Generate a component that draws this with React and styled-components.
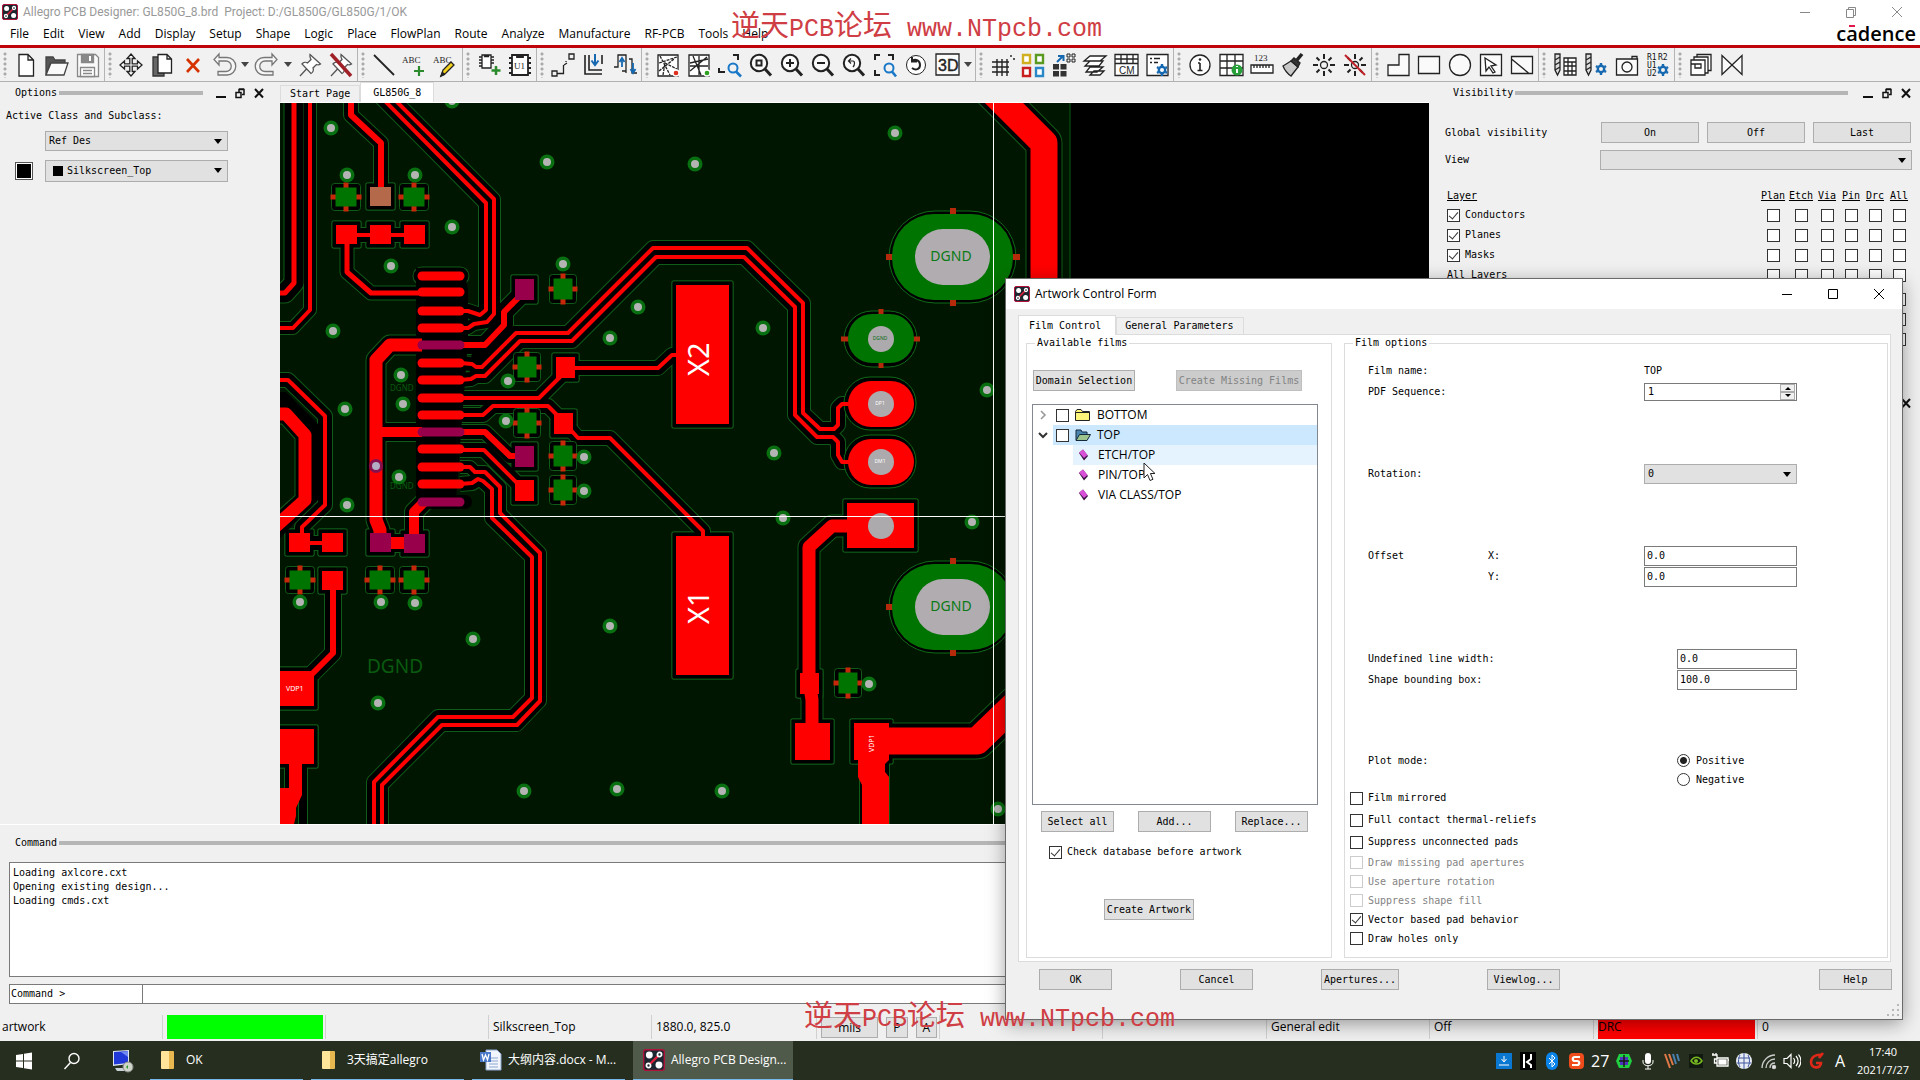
import React from 'react';
import styled, { createGlobalStyle, css } from 'styled-components';

const mono = '"DejaVu Sans Mono", "Noto Sans CJK SC", monospace';
const ui = '"Open Sans", "Noto Sans CJK SC", sans-serif';

/* ---------- data ---------- */

const menuItems = [
  'File', 'Edit', 'View', 'Add', 'Display', 'Setup', 'Shape', 'Logic', 'Place',
  'FlowPlan', 'Route', 'Analyze', 'Manufacture', 'RF-PCB', 'Tools', 'Help',
];

const toolGroups = [
  ['new', 'open', 'save'],
  ['move', 'copy', 'delete', 'undo', 'arrow', 'redo', 'arrow', 'pin', 'unpin'],
  ['line', 'textAdd', 'textEdit'],
  ['chipAdd', 'chip'],
  ['route', 'slide', 'delay'],
  ['ratsOff', 'ratsOn', 'zoomPoints', 'zoomFit', 'zoomIn', 'zoomOut', 'zoomPrev', 'zoomSel', 'redraw', 'view3d', 'arrow'],
  ['grid', 'colors', 'shadow', 'layers', 'cm', 'params'],
  ['info', 'gridInfo', 'measure', 'brush', 'sun', 'sunOff'],
  ['shapeL', 'rect', 'circle', 'select', 'voidRect'],
  ['drillTable', 'drillGear', 'camera', 'rename'],
  ['artwork', 'bowtie'],
];

const layerCols = ['Plan', 'Etch', 'Via', 'Pin', 'Drc', 'All'];
const layerRows = ['Conductors', 'Planes', 'Masks'];

const filmChecks = [
  { label: 'Film mirrored', tall: true },
  { label: 'Full contact thermal-reliefs', tall: true },
  { label: 'Suppress unconnected pads', tall: true },
  { label: 'Draw missing pad apertures', disabled: true },
  { label: 'Use aperture rotation', disabled: true },
  { label: 'Suppress shape fill', disabled: true },
  { label: 'Vector based pad behavior', checked: true },
  { label: 'Draw holes only' },
];

/* board geometry, in canvas units: [points, width, clearance] */
const traces = [
  ['294,95 294,283 285,293 275,293', 5, 7],
  ['310,95 310,310 293,328 275,328', 4, 4],
  ['351,95 351,115 381,143 381,190', 6, 4],
  ['379,95 486,203 486,310 480,315 468,311 455,311', 4, 5],
  ['390,95 494,199 494,314 487,322 474,324 468,328 455,328', 4, 4],
  ['347,235 414,235', 4, 5],
  ['347,240 347,272 371,293 420,293', 5, 4],
  ['422,345 390,345 376,360 376,520 380,530 380,542', 13, 3],
  ['376,432 422,432', 10, 4],
  ['460,345 485,345 504,325 504,312 520,296', 6, 6],
  ['460,363 472,364 476,367 482,367 516,333 568,333 653,248 747,248 803,303 803,413 820,429 834,429 838,425 838,408 842,404 850,404', 4, 5],
  ['460,380 471,379 476,376 485,376 520,341 572,341 656,257 744,257 795,307 795,415 817,437 833,437 838,442 838,455 842,462 850,462', 4, 5],
  ['460,398 539,398 562,375', 4, 5],
  ['570,368 658,368 672,355 680,355', 4, 5],
  ['460,415 483,415 493,406 548,406 560,418 578,438 610,438 703,531 703,538', 4, 5],
  ['460,432 485,432 510,456 520,456', 6, 4],
  ['460,450 484,450 520,486', 4, 5],
  ['460,467 470,467 475,472 485,472 500,487 500,513 540,553 540,701 517,725 442,725 382,785 382,830', 4, 4],
  ['460,484 472,483 478,479 483,481 492,489 492,518 532,557 532,698 513,717 438,717 374,782 374,830', 4, 5],
  ['424,502 414,512 414,540', 10, 4],
  ['380,543 414,543', 12, 3],
  ['275,414 286,414 305,435 305,500 275,527', 13, 3],
  ['275,380 288,380 325,416 325,505 302,527 302,540', 4, 5],
  ['299,543 333,543', 4, 5],
  ['333,585 333,653 312,674', 6, 5],
  ['850,526 832,526 809,547 809,680 812,700 812,725', 13, 4],
  ['889,741 977,741 1030,690', 27, 4],
  ['990,89 1044,143 1044,300', 27, 4],
];

const icPins = [276, 292, 311, 328, 345, 363, 380, 398, 415, 432, 449, 467, 484, 502];
const purplePins = [345, 432, 502];

// [x, y, width, height, colour]
const pads = [
  [370, 187, 21, 19, '#b4694b'],
  [336, 225, 21, 19], [370, 225, 21, 19], [404, 225, 21, 19],
  [515, 279, 19, 21, '#99004c'],
  [556, 357, 19, 21], [554, 413, 19, 21],
  [515, 446, 19, 21, '#99004c'], [515, 480, 19, 21],
  [370, 533, 21, 19, '#99004c'], [404, 534, 21, 19, '#99004c'],
  [289, 533, 21, 19], [322, 533, 21, 19], [322, 571, 21, 19],
  [275, 671, 39, 35], [275, 729, 39, 35],
  [676, 285, 53, 139], [676, 536, 53, 139],
  [847, 503, 67, 45], [800, 673, 19, 21], [795, 723, 35, 37], [854, 723, 35, 37],
];

// ground pads with thermal spokes: [centre x, centre y, width, height]
const groundPads = [
  [346, 197, 21, 19], [414, 197, 21, 19], [563, 289, 19, 21], [527, 367, 19, 21],
  [527, 423, 19, 21], [563, 456, 19, 21], [563, 490, 19, 21], [300, 580, 21, 19],
  [380, 580, 21, 19], [414, 580, 21, 19], [848, 683, 19, 21],
];

const vias = [
  [331, 128], [452, 101], [347, 175], [415, 175], [452, 227], [391, 266], [333, 331], [401, 375],
  [403, 404], [345, 409], [547, 162], [638, 307], [610, 338], [563, 264], [508, 381], [506, 421],
  [584, 457], [584, 491], [399, 477], [347, 505], [300, 602], [381, 602], [415, 603], [473, 639],
  [610, 626], [378, 703], [524, 791], [617, 789], [695, 164], [895, 133], [763, 328], [987, 390],
  [774, 453], [783, 518], [972, 522], [869, 684], [722, 791], [998, 809],
];

/* ---------- drawings ---------- */

const BrandIcon = ({ size = 16 }) => (
  <svg width={size} height={size} viewBox="0 0 16 16">
    <rect x="0.5" y="0.5" width="15" height="15" rx="1.5" fill="#1c2630" stroke="#b0123a" />
    <path d="M5 11 11 5" stroke="#e0203a" strokeWidth="1.6" />
    <circle cx="4.6" cy="4.4" r="2.5" fill="#fff" />
    <circle cx="11.6" cy="11.6" r="2.5" fill="#fff" />
    <circle cx="12" cy="4" r="1.5" fill="none" stroke="#fff" strokeWidth="1.3" />
    <circle cx="4" cy="12" r="1.5" fill="none" stroke="#fff" strokeWidth="1.3" />
  </svg>
);

const gear = (x, y) => (
  <g transform={`translate(${x} ${y})`} stroke="#1668b0" fill="none">
    <circle r="3.2" strokeWidth="2.4" />
    <path d="M0-6V-4M0 6V4M-5-3-3.500-2M5 3 3.500 2M-5 3-3.500 2M5-3 3.500-2" strokeWidth="2.4" />
  </g>
);

const lens = (inner) => (
  <>
    <circle cx="12" cy="12" r="8.2" strokeWidth="2" fill="#fafafa" />
    <path d="m18 18 6 6.5" strokeWidth="3" />
    {inner}
  </>
);

const rays = 'M14 3v5M14 20v5M3 14h5M20 14h5M6.500 6.500l3 3M18.500 18.500l3 3M6.500 21.500l3-3M18.500 9.500l3-3';

const pinPath = 'M14 3.500 24.500 13c-2 1.500-4 .5-4 .5L17 17c1 2 0 4.500-2 5.500L6 13c1.500-2 4-2 5.500-1L15 8.500s-1.500-3-1-5zM10.500 18 4 25';

const icons = {
  new: <path d="M7 3.500h9l5.500 5.500v16H7zM16 3.500V9h5.500" fill="#fff" />,
  open: (
    <>
      <path d="M3 24V6h7l2 3h10v4H7z" fill="#555" stroke="#444" />
      <path d="M3 24 8 12h17l-4 12z" fill="#fafafa" stroke="#444" />
    </>
  ),
  save: (
    <g stroke="#888">
      <path d="M3.500 3.500h18l3 3v19h-21z" fill="#fafafa" />
      <path d="M7.500 3.500h12v8h-12z" fill="#888" />
      <path d="M16 5v5" stroke="#fff" strokeWidth="2" />
      <path d="M6.500 16.500h14v9h-14zM9 19.500h9M9 22.500h9" fill="#fff" />
    </g>
  ),
  move: <path d="M14 3l4 4.500h-2.800v5.300h5.300V10L25 14l-4.500 4v-2.800h-5.300v5.300H18L14 25l-4-4.500h2.800v-5.300H7.500V18L3 14l4.500-4v2.800h5.300V7.500H10z" fill="#fff" />,
  copy: (
    <>
      <path d="M5 6h11v19H5z" fill="#666" stroke="#333" />
      <path d="M10 3.500h9l4.500 4.500v14H10zM19 3.500V8h4.500" fill="#fff" />
    </>
  ),
  delete: <path d="m8 8 12 13M20 8 8 21" stroke="#d63200" strokeWidth="2.600" />,
  undo: <path d="M9 3 4 8.500 9 14v-4h7a5 5 0 0 1 0 10.500H8V24h9a8.500 8.500 0 0 0 0-17.500H9z" stroke="#777" fill="#f6f6f6" />,
  redo: <path d="m19 3 5 5.500-5 5.500v-4h-7a5 5 0 0 0 0 10.500h8V24h-9a8.500 8.500 0 0 1 0-17.500h8z" stroke="#777" fill="#f6f6f6" />,
  pin: <path d={pinPath} stroke="#555" fill="#fff" />,
  unpin: (
    <>
      <path d={pinPath} stroke="#555" fill="#fff" />
      <path d="m4 3 20 22" stroke="#a02028" strokeWidth="3.500" />
    </>
  ),
  line: <path d="m4 4 20 20" strokeWidth="1.800" />,
  textAdd: (
    <>
      <text x="1" y="12" fontSize="9" fontFamily="Liberation Serif, serif" fill="#222" stroke="none">ABC</text>
      <path d="M18 15v10M13 20h10" stroke="#2b8a2b" strokeWidth="2.200" />
    </>
  ),
  textEdit: (
    <>
      <text x="1" y="12" fontSize="9" fontFamily="Liberation Serif, serif" fill="#222" stroke="none">ABC</text>
      <path d="m9 25 2-6 8-8 3 3-8 8z" fill="#f2d21e" />
      <path d="m9 25 1.500-3.500 2 2z" fill="#222" />
    </>
  ),
  chipAdd: (
    <>
      <path d="M7 4h9v13H7zM7 6H4M7 9H4M7 12H4M7 15H4M16 6h3M16 9h3M16 12h3M9.500 4v1.500h4V4" fill="#fff" />
      <path d="M21 15v9M16.500 19.500h9" stroke="#2b8a2b" strokeWidth="2.500" />
    </>
  ),
  chip: (
    <>
      <path d="M6 4h16v20H6zM6 7H3M6 12H3M6 17H3M6 22H3M22 7h3M22 12h3M22 17h3M22 22h3M11 4v2h6V4" fill="#fff" strokeWidth="1.800" />
      <text x="8" y="18" fontSize="9" fontFamily="Liberation Serif, serif" fill="#222" stroke="none">U1</text>
    </>
  ),
  route: <path d="M3 20h5v5H3zM20 3h5v5h-5zM8 22.500h6.500V14M17 10v1M18 12l-3 2" />,
  slide: (
    <>
      <path d="M5 4v19h17M9 4v15h13M22 4v9" strokeWidth="1.600" />
      <path d="M15 3v10M11.500 9.500 15 14l3.500-4.500" stroke="#1668b0" strokeWidth="2" />
    </>
  ),
  delay: (
    <>
      <path d="M3 16h4V4h8v18M11 20h4M18 8h3v14h5" />
      <path d="M11 16V9M8.500 11 11 7l2.500 4M22 12v9M19.500 18l2.500 4 2.500-4" stroke="#1668b0" strokeWidth="1.800" />
    </>
  ),
  ratsOff: (
    <>
      <path d="M4 4h20v21H4z" fill="#fff" />
      <path d="m5 12 18-6M6 5l10 19M5 20 20 8M9 24l2-12 12 6" strokeDasharray="3 1" />
      <circle cx="22" cy="22" r="3" fill="#e03020" stroke="#fff" />
    </>
  ),
  ratsOn: (
    <>
      <path d="M4 4h20v21H4z" fill="#fff" />
      <path d="M5 12 23 8M8 5l8 19M5 20 22 6M14 5v19M5 15h18" />
      <circle cx="22" cy="22" r="3" fill="#30a020" stroke="#fff" />
    </>
  ),
  zoomPoints: (
    <>
      <path d="M17 4h5v5M3 17v4h6" strokeWidth="2" />
      <circle cx="17" cy="17" r="4.500" stroke="#1a78c8" strokeWidth="2" fill="none" />
      <path d="m20 20.500 5 5" stroke="#1a78c8" strokeWidth="2.600" />
    </>
  ),
  zoomFit: lens(<path d="M9.500 9.500h5v5h-5z" strokeWidth="2" />),
  zoomIn: lens(<path d="M12 8v8M8 12h8" strokeWidth="2" />),
  zoomOut: lens(<path d="M8 12h8" strokeWidth="2" />),
  zoomPrev: lens(<path d="M11 7.500 8.500 10l2.500 2.500M9 10h4c2 0 2 4 0 6" strokeWidth="1.200" />),
  zoomSel: (
    <>
      <path d="M4 9V4h5M17 4h5v5M4 19v5h5" strokeWidth="2" />
      <circle cx="18" cy="17" r="4.500" stroke="#1a78c8" strokeWidth="2" fill="none" />
      <path d="m21 20.500 4 5" stroke="#1a78c8" strokeWidth="2.600" />
    </>
  ),
  redraw: (
    <>
      <circle cx="14" cy="14" r="9.500" fill="#fff" strokeWidth="1" />
      <path d="M10 10c4-3 8 0 8 4s-4 6-8 3M10 6v4.500h5" strokeWidth="2" />
    </>
  ),
  view3d: (
    <>
      <path d="M3 3h23v21H3z" fill="#fafafa" />
      <text x="5" y="20" fontSize="16" fontFamily="Liberation Sans, sans-serif" fill="#222" stroke="#222" strokeWidth="0.400">3D</text>
    </>
  ),
  grid: <path d="M9 8v17M14 8v17M19 8v17M4 11h17M4 16h17M4 21h17M23 4v2M25 8h2" strokeWidth="1.400" />,
  colors: (
    <g strokeWidth="2.400" fill="#fff">
      <path d="M4 4h7v8H4z" stroke="#d0b020" />
      <path d="M17 4h7v8h-7z" stroke="#5a9a20" />
      <path d="M4 17h7v8H4z" stroke="#c82020" />
      <path d="M17 17h7v8h-7z" stroke="#2a88c8" />
    </g>
  ),
  shadow: (
    <>
      <path d="M3 13h6v5.500H3zM10.500 13h6v5.500h-6zM3 20h6v5.500H3zM10.500 20h6v5.500h-6z" fill="#333" stroke="none" />
      <path d="M17 3h3v3h-3zM22 3h3v3h-3zM17 8h3v3h-3zM22 8h3v3h-3z" strokeWidth="1" />
      <path d="m7 11 6-6M8 5h5.500v5" stroke="#1668b0" strokeWidth="2" />
    </>
  ),
  layers: <path d="M9 5h16l-6 5H3zM9 10h13l-4 5H4zM9 16h13l-6 5H5zM13 20h10l-4 4H9z" fill="#fff" />,
  cm: (
    <>
      <path d="M3 3.500h23v21H3zM3 8h23M3 12.500h23M9 3.500v9M15 3.500v9M21 3.500v9" fill="#fff" />
      <text x="7" y="23" fontSize="10" fontFamily="Liberation Sans, sans-serif" fill="#222" stroke="none">CM</text>
    </>
  ),
  params: (
    <>
      <path d="M4 3.500h21v21H4zM7 7.500h2M11 7.500h6M7 11.500h2M11 11.500h4" fill="#fff" />
      {gear(19, 19)}
    </>
  ),
  info: (
    <>
      <circle cx="14" cy="14" r="10" fill="#fff" />
      <path d="M14 12v7M12 12h2M11.500 19.500h5" strokeWidth="1.600" />
      <circle cx="14" cy="8.500" r="1.300" fill="#222" stroke="none" />
    </>
  ),
  gridInfo: (
    <>
      <path d="M3 3.500h23v21H3zM3 10h23M3 17h23M10 3.500v21M18 3.500v21" fill="#fff" />
      <circle cx="20" cy="19" r="5.500" fill="#27a03a" stroke="none" />
      <path d="M20 18v4M20 15v1" stroke="#fff" strokeWidth="2" />
    </>
  ),
  measure: (
    <>
      <text x="6" y="10" fontSize="9" fontFamily="Liberation Serif, serif" fill="#222" stroke="none">123</text>
      <path d="M3 14h22v8H3zM6 14v3M9 14v3M12 14v3M15 14v3M18 14v3M21 14v3" fill="#fff" />
    </>
  ),
  brush: (
    <>
      <path d="m4 15 8-5 7 6-7 9c-3-2-6-5-8-10z" fill="#c8c8c8" />
      <path d="m12 10 3-3 6 5-2 4z" fill="#333" />
      <path d="m18 9 5-6" strokeWidth="3.500" />
    </>
  ),
  sun: (
    <>
      <circle cx="14" cy="14" r="3.500" />
      <path d={rays} strokeWidth="2" />
    </>
  ),
  sunOff: (
    <>
      <circle cx="14" cy="14" r="3.500" />
      <path d={rays} strokeWidth="2" />
      <path d="m4 4 20 20" stroke="#c02028" strokeWidth="2" />
    </>
  ),
  shapeL: <path d="M15 3.500h10v21H4V14h11z" fill="#fafafa" />,
  rect: <path d="M3.500 5.500h21v17h-21z" fill="#fafafa" />,
  circle: <circle cx="14" cy="14" r="10.500" fill="#fafafa" />,
  select: (
    <>
      <path d="M3.500 3.500h21v21h-21z" fill="#fafafa" />
      <path d="m8 7 11 7-5 1 4 6-2 1-4-6-3 4z" fill="#fff" />
    </>
  ),
  voidRect: <path d="M3.500 5.500h21v17h-21zM3.500 8l17 14" fill="#fafafa" />,
  drillTable: (
    <>
      <path d="M4 3h5v16l-2.500 5L4 19zM4 9l5-3M4 14l5-3M4 19l5-3" fill="#ddd" />
      <path d="M13 7h12v17H13zM13 11h12M13 15h12M13 20h12M17 7v17M21 11v13" fill="#fff" />
    </>
  ),
  drillGear: (
    <>
      <path d="M4 3h5v16l-2.500 5L4 19zM4 9l5-3M4 14l5-3M4 19l5-3" fill="#ddd" />
      {gear(19, 18)}
    </>
  ),
  camera: (
    <>
      <path d="M3.500 8h21v16h-21zM19 8V5.500h5V8" fill="#fafafa" />
      <circle cx="14" cy="16" r="5" />
    </>
  ),
  rename: (
    <>
      <g fontSize="8" fontFamily="DejaVu Sans Mono, monospace" fill="#111" stroke="none">
        <text x="3" y="9">R1</text>
        <text x="14" y="9">R2</text>
        <text x="3" y="17">U1</text>
        <text x="3" y="25">U2</text>
      </g>
      {gear(19, 19)}
    </>
  ),
  artwork: (
    <>
      <path d="M10 3.500h14v16H10z" fill="#fff" />
      <path d="M7 6h14v16H7z" fill="#fff" />
      <path d="M4 9h14v15H4zM8 13h6v4H8zM4 13h4" fill="#fff" />
    </>
  ),
  bowtie: <path d="M4 4.500v19L24 4.500v19z" fill="#fafafa" />,
};

const ToolIcon = ({ name }) => (
  <svg width="28" height="28" viewBox="0 0 28 28" fill="none" stroke="#222" strokeWidth="1.3">
    {icons[name]}
  </svg>
);

const Board = () => (
  <BoardSvg viewBox="280 103 1149 721" preserveAspectRatio="xMinYMin slice" fontFamily="Noto Sans, sans-serif">
    <rect x="280" y="103" width="790" height="721" fill="#001600" />
    <path d="M1070 103V824" stroke="#0c5a14" />
    {/* copper clearance: thin green edge first, black on top, copper last */}
    <g fill="none" stroke="#0f5c18" strokeLinejoin="round">
      {traces.map(([pts, w, gap]) => (
        <polyline key={pts} points={pts} strokeWidth={w + gap * 2 + 2} />
      ))}
      {pads.map(([x, y, w, h]) => (
        <rect key={`${x}-${y}`} x={x - 4} y={y - 4} width={w + 8} height={h + 8} rx="2" strokeWidth="1.500" />
      ))}
      <path d="M422 276H460" strokeWidth="19" strokeLinecap="round" />
      <path d="M289 764V830H303V764" strokeWidth="10" />
      <path d="M864 760V830H885V760" strokeWidth="10" />
    </g>
    <g fill="none" stroke="#000" strokeLinejoin="round">
      <path d="M416 268H464L468 290V340L456 500L464 508H422L416 500Z" fill="#000" stroke="none" />
      {traces.map(([pts, w, gap]) => (
        <polyline key={pts} points={pts} strokeWidth={w + gap * 2} />
      ))}
      {pads.map(([x, y, w, h]) => (
        <rect key={`${x}-${y}`} x={x - 3} y={y - 3} width={w + 6} height={h + 6} fill="#000" />
      ))}
      <path d="M422 276H460" strokeWidth="17" strokeLinecap="round" />
      <path d="M465 502H422" strokeWidth="14" strokeLinecap="round" />
      <path d="M275 392L286 392L318 424V500L280 538V520L300 500V430L275 408Z" fill="#000" stroke="none" />
      <path d="M474 345L492 345L510 326H568L560 336H518L484 370H468Z" fill="#000" stroke="none" />
      <path d="M289 764V830H303V764" strokeWidth="8" />
      <path d="M864 760V830H885V760" strokeWidth="8" />
    </g>
    <g fill="none" stroke="#f00" strokeLinejoin="round">
      {traces.map(([pts, w]) => (
        <polyline key={pts} points={pts} strokeWidth={w} />
      ))}
      {icPins.map((y) => (
        <path key={y} d={`M422 ${y}H460`} strokeWidth="9" strokeLinecap="round" stroke={purplePins.includes(y) ? '#99004c' : '#f00'} />
      ))}
    </g>
    {pads.map(([x, y, w, h, fill]) => (
      <rect key={`${x}-${y}`} x={x} y={y} width={w} height={h} fill={fill || '#f00'} />
    ))}
    <path d="M289 764H302V795L296 808V816L294 824H280V788H289Z" fill="#f00" />
    <path d="M858 760H889L885 764V772L889 777V824H862V785L858 777Z" fill="#f00" />

    {groundPads.map(([x, y, w, h]) => (
      <g key={`${x}-${y}`}>
        <rect x={x - w / 2 - 4} y={y - h / 2 - 4} width={w + 8} height={h + 8} rx="3" fill="#000" stroke="#0f5c18" />
        <path d={`M${x - w / 2 - 5} ${y}h${w + 10}M${x} ${y - h / 2 - 5}v${h + 10}`} stroke="#c8280a" strokeWidth="5" />
        <rect x={x - w / 2} y={y - h / 2} width={w} height={h} fill="#007400" />
      </g>
    ))}

    {[257, 607].map((y) => (
      <g key={y}>
        <rect x="889" y={y - 46} width="127" height="92" rx="46" fill="#000" stroke="#0f6c18" />
        <path d={`M886 ${y}h7M1013 ${y}h7M953 ${y - 49}v8M953 ${y + 41}v8`} stroke="#b42a0a" strokeWidth="6" />
        <rect x="892" y={y - 43} width="121" height="86" rx="42" fill="#007400" />
        <rect x="915" y={y - 28} width="75" height="56" rx="28" fill="#b0acb0" />
        <text x="951" y={y + 4} fontSize="14" textAnchor="middle" fill="#0a7a14">DGND</text>
      </g>
    ))}
    <rect x="844" y="311" width="73" height="56" rx="28" fill="#000" stroke="#0f6c18" />
    <path d="M841 339h8M912 339h8M881 309v8M881 361v7" stroke="#b42a0a" strokeWidth="5" />
    <rect x="848" y="314" width="66" height="49" rx="24" fill="#007400" />
    {[404, 462].map((y) => (
      <g key={y}>
        <rect x="844" y={y - 27} width="72" height="53" rx="26" fill="#000" stroke="#0f6c18" />
        <path d={`M842 ${y}h12`} stroke="#f00" strokeWidth="4" />
        <rect x="848" y={y - 23} width="66" height="46" rx="23" fill="#f00" />
      </g>
    ))}
    {[339, 404, 462, 526].map((y) => (
      <circle key={y} cx="881" cy={y} r="13" fill="#acaaac" />
    ))}
    <g fontSize="5" textAnchor="middle" fill="#fff">
      <text x="880" y="340" fill="#0a6a14">DGND</text>
      <text x="880" y="405">DP1</text>
      <text x="880" y="463">DM1</text>
    </g>

    {vias.map(([x, y]) => (
      <g key={`${x}-${y}`}>
        <circle cx={x} cy={y} r="7.500" fill="#087010" />
        <circle cx={x} cy={y} r="4" fill="#b4b4b4" />
      </g>
    ))}
    <circle cx="376" cy="466" r="7" fill="#86104c" />
    <circle cx="376" cy="466" r="4" fill="#b4acc4" />

    <g fill="#0a5a10">
      <text x="367" y="673" fontSize="19">DGND</text>
      <text x="390" y="391" fontSize="8">DGND</text>
      <text x="390" y="489" fontSize="8">DGND</text>
    </g>
    <g fill="#fff">
      <text x="286" y="691" fontSize="7">VDP1</text>
      <text transform="translate(874 752) rotate(-90)" fontSize="7">VDP1</text>
      <text transform="translate(709 376) rotate(-90)" fontSize="29">X2</text>
      <text transform="translate(709 624) rotate(-90)" fontSize="29">X1</text>
    </g>
    <path d="M280 516.500H1429M993.500 103V824" stroke="#fff" />
  </BoardSvg>
);

const WinMin = () => <svg width="12" height="12" viewBox="0 0 12 12"><path d="M1 6.500h10" stroke="currentColor" /></svg>;
const WinMax = () => <svg width="12" height="12" viewBox="0 0 12 12"><path d="M1.500 1.500h9v9h-9z" stroke="currentColor" fill="none" /></svg>;
const WinRestore = () => (
  <svg width="12" height="12" viewBox="0 0 12 12"><path d="M1.500 3.500h7v8h-7zM3.500 3.500v-2h7v8h-2" stroke="currentColor" fill="none" /></svg>
);
const WinClose = () => <svg width="12" height="12" viewBox="0 0 12 12"><path d="m1 1 10 10M11 1 1 11" stroke="currentColor" /></svg>;

const DockClose = () => (
  <button aria-label="Close"><svg width="12" height="12"><path d="m2 2 8 8.500M10 2 2 10.500" stroke="#111" strokeWidth="2" /></svg></button>
);

const DockHead = ({ title, plain }) => (
  <DockHeader>
    <h2>{title}</h2>
    <DockBar />
    {!plain && (
      <DockButtons>
        <button aria-label="Minimize"><svg width="12" height="12"><path d="M1 10h10" stroke="#111" strokeWidth="2" /></svg></button>
        <button aria-label="Float"><svg width="12" height="12"><path d="M2 5.500h5v5H2zM5 5V2.500h5v5H8M5 2h5M2 5.500h5" stroke="#111" strokeWidth="1.500" fill="none" /></svg></button>
        <DockClose />
      </DockButtons>
    )}
  </DockHeader>
);

const FolderIcon = ({ open }) => (
  <svg width="16" height="14" viewBox="0 0 16 14">
    {open ? (
      <>
        <path d="M1 12V2h5l1 2h5v3" fill="#4a86b0" stroke="#14283c" />
        <path d="M1 12.500 4.500 6.500H15.500L12 12.500z" fill="#9cc48c" stroke="#14283c" />
      </>
    ) : (
      <path d="M.5 3.500 2 1.500h4l1.500 2h7v9H.5zM1 4.500h13" fill="#fdf57a" stroke="#222" />
    )}
  </svg>
);

const SubclassIcon = () => (
  <svg width="11" height="12" viewBox="0 0 11 12">
    <path d="m1 4 4-3.500L10 7l-4 4.500z" fill="#3a1040" />
    <path d="m1 3.500 4-3L9.500 6 6 9z" fill="#d850d8" />
  </svg>
);

/* ---------- page ---------- */

export default function App() {
  return (
    <>
      <GlobalStyle />
      <Desktop>
        <TitleBar>
          <BrandIcon />
          <h1>Allegro PCB Designer: GL850G_8.brd&nbsp; Project: D:/GL850G/GL850G/1/OK</h1>
          <WindowButtons $muted>
            <button aria-label="Minimize"><WinMin /></button>
            <button aria-label="Restore"><WinRestore /></button>
            <button aria-label="Close"><WinClose /></button>
          </WindowButtons>
        </TitleBar>
        <MenuBar>
          {menuItems.map((item) => (
            <MenuItem key={item}>{item}</MenuItem>
          ))}
          <Logo>c<Macron>a</Macron>dence</Logo>
        </MenuBar>
        <Toolbar>
          {toolGroups.map((group) => (
            <ToolGroup key={group[0]}>
              <Grip />
              {group.map((name, i) =>
                name === 'arrow' ? (
                  <DropButton key={i} aria-label="More" />
                ) : (
                  <ToolButton key={name} aria-label={name}><ToolIcon name={name} /></ToolButton>
                )
              )}
            </ToolGroup>
          ))}
        </Toolbar>

        <Workspace>
          <MainColumn>
            <EditorRow>
              <OptionsPanel>
                <DockHead title="Options" />
                <PanelLabel>Active Class and Subclass:</PanelLabel>
                <ClassRow>
                  <SelectBox>
                    <select aria-label="Class"><option>Ref Des</option></select>
                  </SelectBox>
                </ClassRow>
                <ClassRow>
                  <Swatch aria-label="Subclass color" />
                  <SelectBox $tall>
                    <Chip />
                    <select aria-label="Subclass"><option>Silkscreen_Top</option></select>
                  </SelectBox>
                </ClassRow>
              </OptionsPanel>
              <Editor>
                <DocTabs>
                  <DocTab>Start Page</DocTab>
                  <DocTab $active>GL850G_8</DocTab>
                </DocTabs>
                <CanvasArea><Board /></CanvasArea>
              </Editor>
            </EditorRow>
            <CommandPanel>
              <DockHead title="Command" plain />
              <Log>
                <p>Loading axlcore.cxt</p>
                <p>Opening existing design...</p>
                <p>Loading cmds.cxt</p>
              </Log>
              <CommandLine>
                <label htmlFor="cmd">Command &gt;</label>
                <input id="cmd" />
              </CommandLine>
            </CommandPanel>
          </MainColumn>

          <VisibilityPanel>
            <DockHead title="Visibility" />
            <VisRow>
              <span>Global visibility</span>
              <VisButtons>
                <PushButton>On</PushButton>
                <PushButton>Off</PushButton>
                <PushButton>Last</PushButton>
              </VisButtons>
            </VisRow>
            <VisRow>
              <label htmlFor="view">View</label>
              <SelectBox $wide>
                <select id="view"><option></option></select>
              </SelectBox>
            </VisRow>
            <LayerTable>
              <thead>
                <tr>
                  <th>Layer</th>
                  {layerCols.map((c) => <th key={c}>{c}</th>)}
                </tr>
              </thead>
              <tbody>
                {layerRows.map((row) => (
                  <tr key={row}>
                    <td>
                      <CheckLabel><Checkbox defaultChecked />{row}</CheckLabel>
                    </td>
                    {layerCols.map((c) => <td key={c}><Checkbox aria-label={`${row} ${c}`} /></td>)}
                  </tr>
                ))}
                <tr>
                  <td>All Layers</td>
                  {layerCols.map((c) => <td key={c}><Checkbox aria-label={`All layers ${c}`} /></td>)}
                </tr>
              </tbody>
              <tbody>
                {[1, 2, 3].map((n) => (
                  <tr key={n}>
                    <td />
                    {layerCols.map((c) => <td key={c}><Checkbox aria-label={`Layer ${n} ${c}`} /></td>)}
                  </tr>
                ))}
              </tbody>
            </LayerTable>
            <LowerDock><DockClose /></LowerDock>
          </VisibilityPanel>
        </Workspace>

        <StatusBar>
          <StatusCell $w={163}>artwork</StatusCell>
          <StatusCell $w={163}><StatusFill $color="#00ff00" /></StatusCell>
          <StatusCell $w={163} />
          <StatusCell $w={163}>Silkscreen_Top</StatusCell>
          <StatusCell $w={165}>1880.0, 825.0</StatusCell>
          <StatusCell $w={123}>
            <StatusButton $w={59}>mils</StatusButton>
            <StatusButton $w={22}>P</StatusButton>
            <StatusButton $w={22}>A</StatusButton>
          </StatusCell>
          <StatusCell $w={163} />
          <StatusCell $w={164} />
          <StatusCell $w={163}>General edit</StatusCell>
          <StatusCell $w={164}>Off</StatusCell>
          <StatusCell $w={164}><StatusFill $color="#ff0000">DRC</StatusFill></StatusCell>
          <StatusCell>0</StatusCell>
        </StatusBar>

        <Taskbar>
          <TaskIcon aria-label="Start">
            <svg width="18" height="18" viewBox="0 0 18 18" fill="#fff"><path d="M1 3l7-1v6.500H1zM9 1.800 17 .6v7.900H9zM1 9.500h7V16l-7-1zM9 9.500h8v7.900l-8-1.200z" /></svg>
          </TaskIcon>
          <TaskIcon aria-label="Search">
            <svg width="18" height="18" viewBox="0 0 18 18" fill="none" stroke="#fff" strokeWidth="1.400"><circle cx="11" cy="6.500" r="5" /><path d="m7.500 10.500-6 6.500" /></svg>
          </TaskIcon>
          <TaskIcon $wide aria-label="Remote desktop">
            <svg width="24" height="24" viewBox="0 0 24 24">
              <path d="m2 2 16-1v14L2 17z" fill="#dde6f2" />
              <path d="m3 3 14-1v12L3 15.500z" fill="#2038d8" />
              <path d="m10 3 7-1v6z" fill="#7088f0" />
              <path d="M4 19h10l3 3H6z" fill="#c8d0d8" />
              <circle cx="17" cy="18" r="5" fill="#cdd6c8" stroke="#888" />
              <path d="m15 18 2-2v4z" fill="#2f9a2f" />
            </svg>
          </TaskIcon>
          <TaskButton>
            <TaskFolder />OK
          </TaskButton>
          <TaskButton>
            <TaskFolder />3天搞定allegro
          </TaskButton>
          <TaskButton>
            <svg width="22" height="22" viewBox="0 0 22 22">
              <path d="M6 1h11l4 4v16H6z" fill="#f2f6fc" stroke="#8aa6d0" />
              <path d="M9 9h9M9 12h9M9 15h9M9 18h9" stroke="#8aa6d0" />
              <path d="M0 3h11v10H0z" fill="#4a78c8" />
              <path d="m2 5 1.500 6L5.500 6l2 5L9 5" stroke="#fff" fill="none" strokeWidth="1.300" />
            </svg>
            大纲内容.docx - M...
          </TaskButton>
          <TaskButton $active>
            <BrandIcon size={22} />Allegro PCB Design...
          </TaskButton>
          <Tray>
            <svg viewBox="0 0 18 18"><path d="M1 1h16v16H1z" fill="#0a78d0" /><path d="M9 4v5M6.500 7 9 10l2.500-3M4 13h10" stroke="#fff" fill="none" /></svg>
            <svg viewBox="0 0 18 18"><path d="M1 0h16v18H1z" fill="#000" /><path d="M5 2v14M12 2v5L8 10l4 3v3" stroke="#fff" strokeWidth="2" fill="none" /></svg>
            <svg viewBox="0 0 18 18"><rect x="3" width="12" height="18" rx="6" fill="#0a84e8" /><path d="m6 6 6 6-3 3V3l3 3-6 6" stroke="#fff" fill="none" /></svg>
            <svg viewBox="0 0 18 18"><rect x="2" y="1" width="15" height="16" rx="4" fill="#f04c1c" /><path d="M13 5H8c-3 0-3 4 0 4h2c3 0 3 4 0 4H5" stroke="#fff" strokeWidth="2.200" fill="none" /></svg>
            <b>27</b>
            <svg viewBox="0 0 18 18"><path d="M4 2h10l3 7-3 7H4L1 9z" fill="#20d040" /><path d="M5 5h8v8H5z" fill="#5030c0" /><path d="M9 3v12M4 9h10" stroke="#102010" strokeWidth="1.500" /></svg>
            <svg viewBox="0 0 18 18"><rect x="6" y="1" width="6" height="11" rx="3" fill="#fff" /><path d="M4 8v2c0 5 10 5 10 0V8M9 14v3M6 17h6" stroke="#fff" fill="none" /></svg>
            <svg viewBox="0 0 18 18" strokeWidth="2"><path d="m2 2 5 14M6 2l4 11" stroke="#e07848" /><path d="m10 2 3 10M14 2l2 7" stroke="#4a80b0" /></svg>
            <svg viewBox="0 0 18 18"><path d="M2 2h14v14H2z" fill="#101810" /><path d="M4 9c3-5 8-5 11 0-3 4-8 4-11 0z" stroke="#78b820" strokeWidth="1.500" fill="none" /><circle cx="9" cy="9" r="2" fill="#78b820" /></svg>
            <svg viewBox="0 0 18 18" fill="none" stroke="#fff" strokeWidth="1.300"><path d="M6 6h11v8H6zM17 8h1M1 3h5v4H3.500v4H6M2 1v2M5 1v2" /><path d="M8 8h7v4H8z" fill="#fff" /></svg>
            <svg viewBox="0 0 18 18"><circle cx="9" cy="9" r="8" fill="#e8ecf4" /><path d="M3 6h12M2 11h14M9 1v16M5 3c-2 4-2 8 0 12M13 3c2 4 2 8 0 12" stroke="#4058a0" fill="none" /></svg>
            <svg viewBox="0 0 18 18" fill="none" stroke="#ccc" strokeWidth="1.400"><path d="M3 16C3 9 9 3 16 3M7 16c0-5 4-9 9-9M11 16c0-3 2-5 5-5" /><circle cx="15" cy="15" r="1.500" fill="#fff" /></svg>
            <svg viewBox="0 0 18 18" fill="none" stroke="#fff" strokeWidth="1.200"><path d="M1 6.500h3l4-4v13l-4-4H1zM10.500 6c1.500 2 1.500 4 0 6M13 4c2.500 3 2.500 7 0 10M15.500 2.500c3 4 3 9 0 13" /></svg>
            <svg viewBox="0 0 18 18" fill="none" stroke="#e02818" strokeWidth="2.600"><path d="M15 3c-6-1-11 2-11 7 0 7 10 7 10 1H9M12 6l4-5" /></svg>
            <b>A</b>
            <Clock>
              <span>17:40</span>
              <span>2021/7/27</span>
            </Clock>
          </Tray>
        </Taskbar>

        <ArtworkDialog />
        <Watermark $x={731} $y={5}><em>逆天</em>PCB<em>论坛</em> www.NTpcb.com</Watermark>
        <Watermark $x={804} $y={995}><em>逆天</em>PCB<em>论坛</em> www.NTpcb.com</Watermark>
      </Desktop>
    </>
  );
}

const ArtworkDialog = () => (
  <Dialog role="dialog" aria-label="Artwork Control Form">
    <DialogTitle>
      <BrandIcon />
      <h2>Artwork Control Form</h2>
      <WindowButtons>
        <button aria-label="Minimize"><WinMin /></button>
        <button aria-label="Maximize"><WinMax /></button>
        <button aria-label="Close"><WinClose /></button>
      </WindowButtons>
    </DialogTitle>
    <FormTabs>
      <FormTab $active>Film Control</FormTab>
      <FormTab>General Parameters</FormTab>
    </FormTabs>
    <TabPanel>
      <Group $w={306}>
        <legend>Available films</legend>
        <FilmActions>
          <PushButton $w={102}>Domain Selection</PushButton>
          <PushButton $w={126} disabled>Create Missing Films</PushButton>
        </FilmActions>
        <Tree>
          <TreeRow>
            <Chevron><path d="m3 1 4 4-4 4" stroke="#999" strokeWidth="1.600" fill="none" /></Chevron>
            <TreeLabel>
              <Checkbox aria-label="BOTTOM" />
              <FolderIcon />BOTTOM
            </TreeLabel>
          </TreeRow>
          <TreeRow>
            <Chevron><path d="m1 3 4 4 4-4" stroke="#333" strokeWidth="2" fill="none" /></Chevron>
            <TreeLabel $bg="#cce8ff">
              <Checkbox aria-label="TOP" />
              <FolderIcon open />TOP
            </TreeLabel>
          </TreeRow>
          <TreeRow $child><TreeLabel $bg="#e5f3ff"><SubclassIcon />ETCH/TOP</TreeLabel></TreeRow>
          <TreeRow $child><TreeLabel><SubclassIcon />PIN/TOP</TreeLabel></TreeRow>
          <TreeRow $child><TreeLabel><SubclassIcon />VIA CLASS/TOP</TreeLabel></TreeRow>
          <Cursor width="13" height="20" viewBox="0 0 13 20">
            <path d="M1 1v15l3.500-3.500 2.500 6 3-1.200-2.600-5.800H12z" fill="#fff" stroke="#222" />
          </Cursor>
        </Tree>
        <ListActions>
          <PushButton $w={73}>Select all</PushButton>
          <PushButton $w={73}>Add...</PushButton>
          <PushButton $w={73}>Replace...</PushButton>
        </ListActions>
        <CheckRow>
          <CheckLabel><Checkbox defaultChecked />Check database before artwork</CheckLabel>
        </CheckRow>
        <CreateRow><PushButton $w={90}>Create Artwork</PushButton></CreateRow>
      </Group>

      <Group>
        <legend>Film options</legend>
        <FormRows>
          <Section>
            <FormRow><span>Film name:</span><output>TOP</output></FormRow>
            <FormRow>
              <label htmlFor="pdf">PDF Sequence:</label>
              <SpinBox>
                <input id="pdf" defaultValue="1" />
                <Spinner>
                  <button aria-label="Up"><svg width="8" height="4"><path d="m1 4 3-3 3 3z" /></svg></button>
                  <button aria-label="Down"><svg width="8" height="4"><path d="m1 0 3 3 3-3z" /></svg></button>
                </Spinner>
              </SpinBox>
            </FormRow>
          </Section>
          <Section>
            <FormRow>
              <label htmlFor="rot">Rotation:</label>
              <FormSelect><select id="rot"><option>0</option></select></FormSelect>
            </FormRow>
          </Section>
          <Section>
            <FormRow><span>Offset</span><label htmlFor="offx">X:</label><Field id="offx" defaultValue="0.0" /></FormRow>
            <FormRow><span /><label htmlFor="offy">Y:</label><Field id="offy" defaultValue="0.0" /></FormRow>
          </Section>
          <Section>
            <FormRow><label htmlFor="ulw">Undefined line width:</label><Field $short id="ulw" defaultValue="0.0" /></FormRow>
            <FormRow><label htmlFor="sbb">Shape bounding box:</label><Field $short id="sbb" defaultValue="100.0" /></FormRow>
          </Section>
          <Section>
            <FormRow $low>
              <span>Plot mode:</span>
              <RadioLabel><Radio name="plot" defaultChecked />Positive</RadioLabel>
            </FormRow>
            <FormRow $low>
              <RadioLabel><Radio name="plot" />Negative</RadioLabel>
            </FormRow>
          </Section>
        </FormRows>
        <OptionList>
          {filmChecks.map((c) => (
            <CheckLabel key={c.label} $h={c.tall ? 22 : 19} $off={c.disabled}>
              <Checkbox defaultChecked={c.checked} disabled={c.disabled} />
              {c.label}
            </CheckLabel>
          ))}
        </OptionList>
      </Group>
    </TabPanel>
    <DialogFooter>
      <PushButton $w={73}>OK</PushButton>
      <PushButton $w={73}>Cancel</PushButton>
      <PushButton $w={78}>Apertures...</PushButton>
      <PushButton $w={73} $lead={20}>Viewlog...</PushButton>
      <PushButton $w={73} $lead="auto">Help</PushButton>
    </DialogFooter>
    <SizeGrip width="16" height="16" viewBox="0 0 16 16">
      <path d="M13 3h2v2h-2zM13 8h2v2h-2zM13 13h2v2h-2zM8 8h2v2H8zM8 13h2v2H8zM3 13h2v2H3z" fill="#b8b8b8" />
    </SizeGrip>
  </Dialog>
);

/* ---------- styles ---------- */

const GlobalStyle = createGlobalStyle`
  * { box-sizing: border-box; }
  body { margin: 0; background: #f0f0f0; color: #000; font: 10px/14px ${mono}; }
  h1, h2, p, ul { margin: 0; padding: 0; font: inherit; }
  button, input, select { font: inherit; color: inherit; margin: 0; border-radius: 0; }
  svg { display: block; flex: none; }
`;

const Desktop = styled.div`
  position: relative;
  display: flex;
  flex-direction: column;
  min-height: 100vh;
  overflow: hidden;
  background: #f0f0f0;
`;

const TitleBar = styled.header`
  display: flex;
  align-items: center;
  height: 24px;
  padding-left: 2px;
  background: #fff;
  h1 {
    flex: 1;
    margin-left: 5px;
    color: #999;
    font: 12px/16px Roboto, sans-serif;
  }
`;

const WindowButtons = styled.div`
  display: flex;
  color: ${(p) => (p.$muted ? '#888' : '#000')};
  button {
    display: flex;
    align-items: center;
    justify-content: center;
    width: 46px;
    height: 24px;
    padding: 0;
    border: 0;
    background: none;
  }
`;

const MenuBar = styled.nav`
  display: flex;
  align-items: center;
  height: 24px;
  padding: 0 4px 2px 3px;
  background: #fff;
  border-bottom: 3px solid #c0040c;
`;

const MenuItem = styled.button`
  padding: 0 7px;
  border: 0;
  background: none;
  font: 12px/18px ${ui};
`;

const Logo = styled.span`
  margin-left: auto;
  font: 600 20px/20px ${ui};
`;

const Macron = styled.span`
  position: relative;
  &::before {
    content: '';
    position: absolute;
    top: 5px;
    left: 3px;
    width: 6px;
    height: 2px;
    background: #e0184c;
  }
`;

const Toolbar = styled.div`
  display: flex;
  height: 34px;
  background: #f1f1f1;
  border-bottom: 1px solid #b0b0b0;
`;

const ToolGroup = styled.div`
  display: flex;
  align-items: center;
  padding-right: 1px;
  border-right: 1px solid #b4b4b4;
  &:last-child {
    border-right: 0;
  }
`;

const Grip = styled.span`
  width: 10px;
  height: 27px;
  background: radial-gradient(circle at 5px 3px, #aaa 1px, transparent 2px) 0 0 / 10px 5px;
`;

const ToolButton = styled.button`
  display: flex;
  justify-content: center;
  width: 31px;
  padding: 0;
  border: 0;
  background: none;
`;

const DropButton = styled.button`
  width: 12px;
  height: 28px;
  padding: 0 2px;
  border: 0;
  background: none;
  &::before {
    content: '';
    display: block;
    border: 4px solid transparent;
    border-top: 5px solid #444;
    border-bottom: 0;
  }
`;

const Workspace = styled.div`
  flex: 1;
  display: flex;
`;

const MainColumn = styled.main`
  flex: 1;
  display: flex;
  flex-direction: column;
  min-width: 0;
`;

const EditorRow = styled.div`
  flex: 1;
  display: flex;
  min-height: 0;
`;

const OptionsPanel = styled.section`
  width: 280px;
  padding: 4px 15px 0;
`;

const DockHeader = styled.div`
  display: flex;
  align-items: center;
  gap: 2px;
  height: 14px;
`;

const DockBar = styled.div`
  flex: 1;
  height: 4px;
  background: #b6b6b6;
`;

const DockButtons = styled.div`
  display: flex;
  gap: 7px;
  padding-left: 10px;
  button {
    padding: 0;
    border: 0;
    background: none;
  }
`;

const LowerDock = styled(DockButtons)`
  justify-content: flex-end;
  margin-top: 48px;
`;

const PanelLabel = styled.p`
  margin: 9px -9px 8px;
`;

const ClassRow = styled.div`
  display: flex;
  justify-content: flex-end;
  align-items: center;
  gap: 12px;
  margin-bottom: 9px;
  padding-right: 37px;
`;

const Swatch = styled.button`
  width: 18px;
  height: 18px;
  padding: 0;
  border: 1px solid #555;
  background: #000;
  box-shadow: inset 0 0 0 1px #fff;
`;

const SelectBox = styled.div`
  position: relative;
  display: flex;
  align-items: center;
  width: ${(p) => (p.$wide ? '312px' : '183px')};
  height: ${(p) => (p.$tall ? '22px' : '20px')};
  padding-left: 3px;
  border: 1px solid #adadad;
  background: #e1e1e1;
  select {
    flex: 1;
    appearance: none;
    padding: 0;
    border: 0;
    background: none;
    outline: 0;
  }
  &::after {
    content: '';
    position: absolute;
    right: 5px;
    top: 7px;
    border: 4px solid transparent;
    border-top: 5px solid #000;
    border-bottom: 0;
  }
`;

const Chip = styled.span`
  width: 10px;
  height: 10px;
  margin: 0 4px;
  background: #000;
`;

const Editor = styled.section`
  flex: 1;
  display: flex;
  flex-direction: column;
  min-width: 0;
  margin-right: 11px;
`;

const DocTabs = styled.div`
  display: flex;
  align-items: flex-end;
  height: 21px;
  border-bottom: 1px solid #fff;
`;

const DocTab = styled.button`
  height: ${(p) => (p.$active ? '20px' : '17px')};
  padding: 0 ${(p) => (p.$active ? '12px' : '9px')};
  border: 1px solid #dcdcdc;
  border-bottom: 0;
  background: ${(p) => (p.$active ? '#fff' : '#f0f0f0')};
`;

const CanvasArea = styled.div`
  flex: 1;
  min-height: 0;
  overflow: hidden;
  background: #000;
`;

const BoardSvg = styled.svg`
  width: 100%;
  height: 721px;
`;

const CommandPanel = styled.section`
  padding: 11px 15px 1px;
  border-top: 1px solid #fff;
`;

const Log = styled.div`
  height: 115px;
  margin: 12px -6px 7px;
  padding: 3px;
  border: 1px solid #7a7a7a;
  background: #fff;
`;

const CommandLine = styled.div`
  display: flex;
  height: 20px;
  margin: 0 -6px;
  border: 1px solid #7a7a7a;
  background: #fff;
  label {
    width: 133px;
    padding: 2px 1px;
    border-right: 1px solid #7a7a7a;
  }
  input {
    flex: 1;
    border: 0;
    outline: 0;
    background: none;
  }
`;

const VisibilityPanel = styled.aside`
  width: 480px;
  padding: 4px 8px 0 13px;
  ${DockBar} {
    margin-right: 2px;
  }
  ${DockHeader} {
    margin-bottom: 22px;
  }
`;

const VisRow = styled.div`
  display: flex;
  align-items: center;
  justify-content: space-between;
  margin: 0 0 7px -8px;
`;

const VisButtons = styled.div`
  display: flex;
  gap: 8px;
  width: 312px;
  padding: 0 1px;
  button {
    flex: 1;
  }
`;

const PushButton = styled.button`
  width: ${(p) => (p.$w ? `${p.$w}px` : 'auto')};
  height: 21px;
  padding: 0;
  margin-left: ${(p) => (p.$lead === 'auto' ? 'auto' : `${p.$lead || 0}px`)};
  border: 1px solid #adadad;
  background: #e1e1e1;
  white-space: nowrap;
  &:disabled {
    background: #ccc;
    border-color: #bfbfbf;
    color: #838383;
  }
`;

const LayerTable = styled.table`
  table-layout: fixed;
  width: 466px;
  margin: 17px 0 0 -8px;
  border-collapse: collapse;
  th {
    width: 24px;
    height: 18px;
    padding: 0;
    font-weight: normal;
    text-decoration: underline;
  }
  th:first-child {
    width: auto;
    text-align: left;
    padding-left: 2px;
  }
  th:nth-child(2),
  th:nth-child(3) {
    width: 28px;
  }
  td {
    height: 20px;
    padding: 0;
  }
  td:first-child {
    padding-left: 2px;
  }
  td:not(:first-child) input {
    display: block;
    margin: 0 auto;
  }
  tbody + tbody::before {
    content: '';
    display: block;
    height: 4px;
  }
`;

const Checkbox = styled.input.attrs({ type: 'checkbox' })`
  appearance: none;
  position: relative;
  flex: none;
  width: 13px;
  height: 13px;
  border: 1px solid #333;
  background: #fff;
  &:checked::after {
    content: '';
    position: absolute;
    left: 3px;
    top: 0;
    width: 4px;
    height: 8px;
    border: solid #333;
    border-width: 0 1px 1px 0;
    transform: rotate(40deg);
  }
  &:disabled {
    border-color: #ccc;
  }
`;

const CheckLabel = styled.label`
  display: flex;
  align-items: center;
  gap: 5px;
  height: ${(p) => (p.$h ? `${p.$h}px` : 'auto')};
  color: ${(p) => (p.$off ? '#838383' : 'inherit')};
`;

const StatusBar = styled.footer`
  display: flex;
  height: 36px;
  padding-top: 10px;
  font: 12px/24px ${ui};
`;

const StatusCell = styled.div`
  display: flex;
  gap: 8px;
  width: ${(p) => (p.$w ? `${p.$w}px` : 'auto')};
  height: 24px;
  padding: 0 2px 0 4px;
  border-right: ${(p) => (p.$w ? '1px solid #d0d0d0' : '0')};
  white-space: nowrap;
  &:first-child {
    padding-left: 2px;
  }
`;

const StatusFill = styled.div`
  flex: 1;
  background: ${(p) => p.$color};
`;

const StatusButton = styled.button`
  width: ${(p) => p.$w}px;
  height: 21px;
  margin-top: 2px;
  padding: 0;
  border: 1px solid #adadad;
  background: #e1e1e1;
  line-height: 18px;
`;

const Taskbar = styled.footer`
  display: flex;
  height: 40px;
  background: #262f1f;
  color: #fff;
  font: 12px/20px ${ui};
`;

const TaskIcon = styled.button`
  display: flex;
  align-items: center;
  justify-content: center;
  width: ${(p) => (p.$wide ? '54px' : '48px')};
  padding: 0;
  border: 0;
  background: none;
`;

const TaskButton = styled.button`
  display: flex;
  align-items: center;
  gap: 6px;
  width: 153px;
  margin-right: 8px;
  padding: 0 8px;
  border: 0;
  border-bottom: 2px solid #76b9ed;
  background: none;
  white-space: nowrap;
  overflow: hidden;
  ${(p) =>
    p.$active &&
    css`
      width: 160px;
      padding: 0 10px;
      background: #4f5a4b;
    `}
`;

const TaskFolder = styled.span`
  width: 13px;
  height: 18px;
  margin: 0 6px 0 3px;
  border-radius: 1px;
  background: linear-gradient(90deg, #ffe59a 60%, #e8b850 60%);
`;

const Tray = styled.div`
  display: flex;
  align-items: center;
  gap: 6px;
  margin-left: auto;
  padding-right: 11px;
  svg {
    width: 18px;
    height: 18px;
  }
  b {
    width: 18px;
    font: 16px/20px ${ui};
    text-align: center;
  }
`;

const Clock = styled.div`
  display: flex;
  flex-direction: column;
  align-items: center;
  width: 52px;
  margin-left: 2px;
  font-size: 11px;
  line-height: 18px;
`;

const Watermark = styled.div`
  position: absolute;
  left: ${(p) => p.$x}px;
  top: ${(p) => p.$y}px;
  color: #cf3e44;
  font: 25px/36px "Liberation Mono", monospace;
  white-space: pre;
  pointer-events: none;
  em {
    font: 29px/36px "Noto Sans CJK SC", sans-serif;
  }
`;

/* floating window */
const Dialog = styled.section`
  position: absolute;
  top: 279px;
  right: 18px;
  width: 896px;
  height: 740px;
  display: flex;
  flex-direction: column;
  background: #f0f0f0;
  outline: 1px solid #6a6a6a;
  box-shadow: 0 4px 18px rgba(0, 0, 0, 0.4);
`;

const DialogTitle = styled.header`
  display: flex;
  align-items: center;
  height: 30px;
  padding-left: 8px;
  background: #fff;
  h2 {
    flex: 1;
    margin-left: 5px;
    font: 12px/16px ${ui};
  }
`;

const FormTabs = styled.div`
  display: flex;
  align-items: flex-end;
  height: 25px;
  padding-left: 12px;
`;

const FormTab = styled.button`
  height: 17px;
  padding: 0 9px 0 8px;
  border: 1px solid #dcdcdc;
  border-bottom: 0;
  background: #f0f0f0;
  ${(p) =>
    p.$active &&
    css`
      height: 20px;
      margin-bottom: -1px;
      padding: 0 14px 0 10px;
      background: #fff;
      z-index: 1;
    `}
`;

const TabPanel = styled.div`
  flex: 1;
  display: flex;
  gap: 12px;
  margin: 0 11px 0 12px;
  padding: 1px 2px 3px 7px;
  border: 1px solid #dcdcdc;
  background: #fff;
`;

const Group = styled.fieldset`
  flex: ${(p) => (p.$w ? `0 0 ${p.$w}px` : '1')};
  min-width: 0;
  margin: 0;
  padding: 0;
  border: 1px solid #dcdcdc;
  legend {
    margin-left: 8px;
    padding: 0 2px;
    line-height: 14px;
  }
`;

const FilmActions = styled.div`
  display: flex;
  gap: 41px;
  padding: 20px 0 13px 6px;
`;

const Tree = styled.ul`
  position: relative;
  height: 401px;
  margin: 0 13px 0 5px;
  border: 1px solid #828790;
  background: #fff;
  list-style: none;
  font: 12px/20px ${ui};
`;

const TreeRow = styled.li`
  display: flex;
  align-items: center;
  height: 20px;
  padding-left: ${(p) => (p.$child ? '40px' : '5px')};
`;

const Chevron = styled.svg.attrs({ width: 10, height: 10, viewBox: '0 0 10 10' })`
  margin-right: 5px;
`;

const TreeLabel = styled.div`
  flex: 1;
  display: flex;
  align-items: center;
  gap: 6px;
  height: 20px;
  padding-left: 3px;
  background: ${(p) => p.$bg || 'none'};
  ${TreeRow}:nth-child(n + 3) & {
    padding-left: 5px;
    gap: 9px;
  }
`;

const Cursor = styled.svg`
  position: absolute;
  left: 110px;
  top: 57px;
`;

const ListActions = styled.div`
  display: flex;
  gap: 24px;
  padding: 6px 0 13px 14px;
`;

const CheckRow = styled.div`
  padding-left: 22px;
`;

const CreateRow = styled.div`
  padding: 40px 0 0 77px;
`;

const FormRows = styled.div`
  display: flex;
  flex-direction: column;
  gap: 61px;
  padding: 10px 0 0 23px;
`;

const Section = styled.div`
  display: flex;
  flex-direction: column;
`;

const FormRow = styled.div`
  display: grid;
  grid-template-columns: 120px 156px 153px;
  align-items: center;
  height: ${(p) => (p.$low ? '19px' : '21px')};
  white-space: nowrap;
  & > :last-child {
    grid-column: 3;
  }
`;

const fieldBox = css`
  border: 1px solid #7a7a7a;
  background: #fff;
  outline: 0;
`;

const Field = styled.input`
  ${fieldBox}
  justify-self: end;
  width: ${(p) => (p.$short ? '120px' : '153px')};
  height: 20px;
  padding: 0 2px;
`;

const FormSelect = styled(SelectBox)`
  width: 153px;
`;

const SpinBox = styled.div`
  ${fieldBox}
  display: flex;
  height: 18px;
  input {
    flex: 1;
    min-width: 0;
    padding: 0 3px;
    border: 0;
    outline: 0;
    background: none;
  }
`;

const Spinner = styled.div`
  display: flex;
  flex-direction: column;
  width: 15px;
  margin: 0 1px;
  button {
    flex: 1;
    display: flex;
    align-items: center;
    justify-content: center;
    padding: 0;
    border: 1px solid #adadad;
    background: #f0f0f0;
  }
`;

const RadioLabel = styled.label`
  display: flex;
  align-items: center;
  gap: 6px;
  padding-left: 33px;
`;

const Radio = styled.input.attrs({ type: 'radio' })`
  appearance: none;
  width: 13px;
  height: 13px;
  border: 1px solid #333;
  border-radius: 50%;
  background: #fff;
  &:checked {
    background: radial-gradient(circle, #222 3px, #fff 4px);
  }
`;

const OptionList = styled.div`
  margin-top: -2px;
  padding-left: 5px;
`;

const DialogFooter = styled.footer`
  display: flex;
  gap: 68px;
  height: 57px;
  padding: 7px 10px 0 33px;
`;

const SizeGrip = styled.svg`
  position: absolute;
  right: 2px;
  bottom: 2px;
`;
